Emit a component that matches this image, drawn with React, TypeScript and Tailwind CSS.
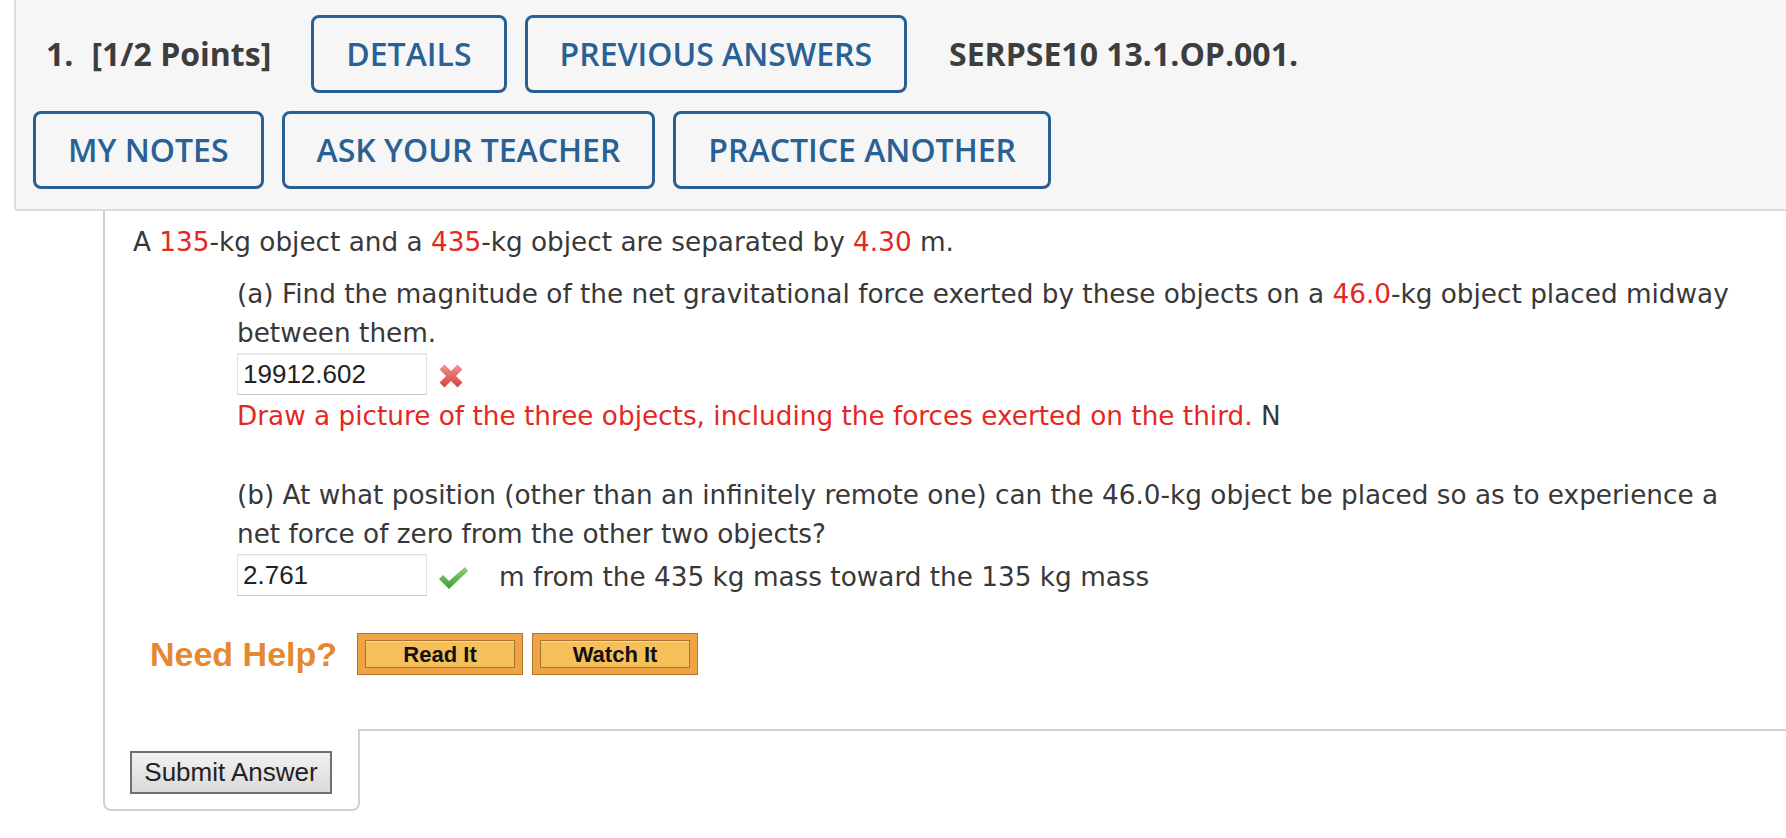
import type { ReactNode } from "react";

const HEAD = "font-['Open_Sans','Liberation_Sans',sans-serif]";
const BODY = "font-['DejaVu_Sans','Verdana',sans-serif]";
const ARIAL = "font-['Liberation_Sans',Arial,sans-serif]";

function Red({ children }: { children: ReactNode }) {
  return <span className="text-[#e4281f]">{children}</span>;
}

function HeadButton({ children }: { children: ReactNode }) {
  return (
    <button
      type="button"
      className="flex h-[78px] items-center rounded-[8px] border-[3px] border-[#2a6195] px-[32px] text-[32px] font-semibold text-[#2a6195]"
    >
      {children}
    </button>
  );
}

function Answer({ value }: { value: string }) {
  return (
    <input
      readOnly
      value={value}
      className={`${ARIAL} h-[42px] w-[190px] border border-[#e2e2e2] border-b-[#c8c8c8] bg-white px-[5px] text-[26px] text-[#222] shadow-[inset_0_1px_2px_rgba(0,0,0,0.06)] outline-none`}
    />
  );
}

function WrongMark() {
  return (
    <svg width="28" height="26" viewBox="0 0 28 26" className="mt-[10px] ml-[10px]">
      <defs>
        <linearGradient id="xg" x1="0" y1="0" x2="0" y2="1">
          <stop offset="0" stopColor="#f08a8a" />
          <stop offset="1" stopColor="#d84848" />
        </linearGradient>
      </defs>
      <path d="M5 4 L23 22 M23 4 L5 22" stroke="url(#xg)" strokeWidth="7" />
    </svg>
  );
}

function RightMark() {
  return (
    <svg width="31" height="24" viewBox="0 0 31 24" className="mt-[12px] ml-[11px]">
      <defs>
        <linearGradient id="cg" x1="0" y1="0" x2="0" y2="1">
          <stop offset="0" stopColor="#8fd27a" />
          <stop offset="1" stopColor="#3f9a3a" />
        </linearGradient>
      </defs>
      <polygon points="1,13 5,9 11,15 27,1 30,5 11,23" fill="url(#cg)" />
    </svg>
  );
}

function HelpButton({ children }: { children: ReactNode }) {
  return (
    <div className="h-[42px] w-[166px] border border-[#b8732c] bg-[#eea346] px-[7px] py-[6px]">
      <div
        className={`${ARIAL} flex h-full items-center justify-center border border-[#a8742f] bg-[#f5c05a] text-[22px] font-bold text-[#111] shadow-[inset_0_1px_0_rgba(255,255,255,0.4)]`}
      >
        {children}
      </div>
    </div>
  );
}

export default function App() {
  return (
    <div className="min-h-screen bg-white">
      <header
        className={`${HEAD} ml-[14px] rounded-bl-[4px] border-b-2 border-l-2 border-[#dcdcdc] bg-[#f6f6f6] pt-[15px] pb-[20px] pl-[17px] text-[#3d3d3d]`}
      >
        <div className="flex items-center gap-[18px]">
          <div className="flex items-center pl-[13px] text-[32px] font-bold">
            <span>1.</span>
            <span className="ml-[18px]">[1/2 Points]</span>
          </div>
          <div className="ml-[22px] flex gap-[18px]">
            <HeadButton>DETAILS</HeadButton>
            <HeadButton>PREVIOUS ANSWERS</HeadButton>
          </div>
          <span className="ml-[24px] text-[32px] font-bold">SERPSE10 13.1.OP.001.</span>
        </div>
        <div className="mt-[18px] flex gap-[18px]">
          <HeadButton>MY NOTES</HeadButton>
          <HeadButton>ASK YOUR TEACHER</HeadButton>
          <HeadButton>PRACTICE ANOTHER</HeadButton>
        </div>
      </header>

      <div className="ml-[103px]">
        <div
          className={`${BODY} border-l-2 border-[#d0d0d0] pt-[12px] pb-[54px] pl-[28px] text-[26.3px] leading-[39px] text-[#383838]`}
        >
          <p>
            A <Red>135</Red>-kg object and a <Red>435</Red>-kg object are separated by{" "}
            <Red>4.30</Red> m.
          </p>

          <div className="mt-[13px] pr-[25px] pl-[104px]">
            <p>
              (a) Find the magnitude of the net gravitational force exerted by these objects on a{" "}
              <Red>46.0</Red>-kg object placed midway between them.
            </p>
            <div className="flex h-[44px] items-start">
              <Answer value="19912.602" />
              <WrongMark />
            </div>
            <p>
              <Red>Draw a picture of the three objects, including the forces exerted on the third.</Red> N
            </p>

            <p className="mt-[40px]">
              (b) At what position (other than an infinitely remote one) can the 46.0-kg object be placed so
              as to experience a net force of zero from the other two objects?
            </p>
            <div className="flex items-start">
              <Answer value="2.761" />
              <RightMark />
              <span className="ml-[30px] pt-[4px]">m from the 435 kg mass toward the 135 kg mass</span>
            </div>
          </div>

          <div className="mt-[36px] flex items-center pl-[17px]">
            <span className={`${ARIAL} mr-[20px] text-[34px] font-bold text-[#e4892f]`}>Need Help?</span>
            <div className="flex gap-[9px]">
              <HelpButton>Read It</HelpButton>
              <HelpButton>Watch It</HelpButton>
            </div>
          </div>
        </div>

        <div className="flex">
          <div className="h-[82px] w-[257px] rounded-b-[8px] border-r-2 border-b-2 border-l-2 border-[#d0d0d0] pt-[22px] pl-[25px]">
            <button
              type="button"
              className={`${ARIAL} h-[43px] w-[202px] border-2 border-[#707070] bg-gradient-to-b from-[#f2f2f2] to-[#dadada] text-[26px] text-[#222]`}
            >
              Submit Answer
            </button>
          </div>
          <div className="flex-1 border-t-2 border-[#d0d0d0]" />
        </div>
      </div>
    </div>
  );
}
